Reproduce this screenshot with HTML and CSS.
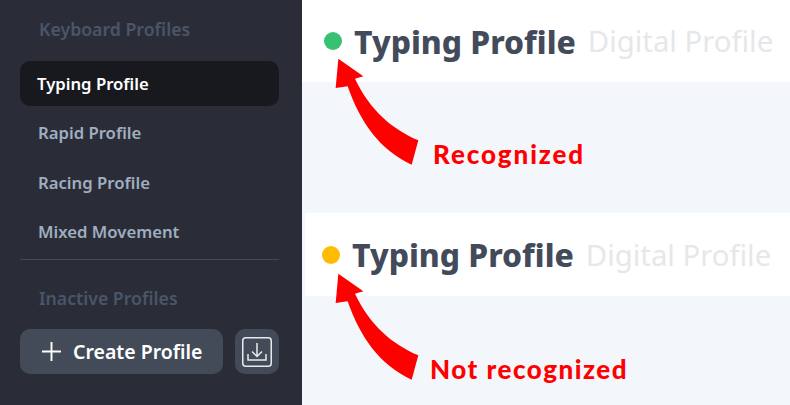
FILE: index.html
```html
<!DOCTYPE html>
<html lang="en">
<head>
    <meta charset="UTF-8">
    <title>Keyboard Profiles</title>
    <link rel="stylesheet" href="styles.css">
</head>
<body>
    <div class="app">
        <aside class="sidebar">
            <h3 class="side-title">Keyboard Profiles</h3>
            <ul class="profile-list">
                <li class="profile-item active">Typing Profile</li>
                <li class="profile-item">Rapid Profile</li>
                <li class="profile-item">Racing Profile</li>
                <li class="profile-item">Mixed Movement</li>
            </ul>
            <hr class="divider">
            <h3 class="side-title inactive">Inactive Profiles</h3>
            <div class="side-actions">
                <button class="create-btn">
                    <svg class="plus-icon" viewBox="0 0 20 20"><path d="M10 0v20M0 10h20"/></svg>
                    Create Profile
                </button>
                <button class="import-btn">
                    <svg class="import-icon" viewBox="0 0 30 30">
                        <rect x="0.75" y="0.75" width="28.5" height="28.5" rx="3"/>
                        <path d="M15 6v13M10 14.5l5 5 5-5M6 17v6h18v-6"/>
                    </svg>
                </button>
            </div>
        </aside>
        <main class="content">
            <section class="state state-ok">
                <header class="state-head">
                    <span class="dot green"></span>
                    <span class="profile-name">Typing Profile</span>
                    <span class="profile-type">Digital Profile</span>
                </header>
                <svg class="arrow" viewBox="100 170 255 330"><path d="M110 175L185 228L160 235C205 330 270 385 350 420L330 493C235 450 175 365 138 258L102 263Z"/></svg>
                <div class="note">Recognized</div>
            </section>
            <section class="state state-bad">
                <header class="state-head">
                    <span class="dot yellow"></span>
                    <span class="profile-name">Typing Profile</span>
                    <span class="profile-type">Digital Profile</span>
                </header>
                <svg class="arrow" viewBox="100 170 255 330"><path d="M110 175L185 228L160 235C205 330 270 385 350 420L330 493C235 450 175 365 138 258L102 263Z"/></svg>
                <div class="note">Not recognized</div>
            </section>
        </main>
    </div>
</body>
</html>
```

FILE: styles.css
```css
* { box-sizing: border-box; }
html, body {
    margin: 0;
    height: 100%;
    overflow: hidden;
}
body {
    font-family: "Noto Sans", "Open Sans", sans-serif;
    background: #f3f6fa;
}
.app {
    display: flex;
    height: 405px;
}

/* sidebar */
.sidebar {
    width: 302px;
    flex: none;
    padding: 0 23px 0 20px;
    background: #2a2d38;
}
.side-title {
    margin: 0;
    padding: 18px 0 0 19px;
    height: 61px;
    font-size: 17.7px;
    line-height: 22px;
    font-weight: 600;
    color: #4a5568;
}
.side-title.inactive {
    padding-top: 27px;
    height: 69.5px;
}
.profile-list {
    list-style: none;
    margin: 0;
    padding: 0;
}
.profile-item {
    height: 49.5px;
    padding-left: 18px;
    line-height: 46px;
    font-size: 16.7px;
    font-weight: 600;
    color: #a0aec0;
    border-radius: 10px;
}
.profile-item.active {
    height: 45px;
    margin-bottom: 4px;
    padding-left: 17px;
    background: #17191f;
    color: #fff;
}
.divider {
    margin: 0;
    border: none;
    border-top: 1px solid #414a58;
}
.side-actions {
    display: flex;
    gap: 12px;
}
.create-btn, .import-btn {
    height: 45px;
    border: none;
    border-radius: 10px;
    background: #434b58;
    color: #fff;
    font-family: inherit;
}
.create-btn {
    width: 203px;
    display: flex;
    align-items: center;
    gap: 12px;
    padding: 0 0 0 22px;
    font-size: 19.5px;
    font-weight: 600;
}
.plus-icon {
    width: 19px;
    height: 19px;
    fill: none;
    stroke: #fff;
    stroke-width: 2;
}
.import-btn {
    width: 44px;
    padding: 0;
    display: flex;
    align-items: center;
    justify-content: center;
}
.import-icon {
    width: 30px;
    height: 30px;
    fill: none;
    stroke: #e8eaee;
    stroke-width: 1.5;
}

/* right side */
.content {
    flex: 1;
    min-width: 0;
}
.state {
    position: relative;
}
.state-ok { height: 213px; }
.state-bad { height: 192px; }
.state-head {
    display: flex;
    align-items: center;
    background: #fff;
    white-space: nowrap;
    overflow: hidden;
}
.state-ok .state-head {
    height: 82px;
    padding-left: 22px;
}
.state-bad .state-head {
    height: 83px;
    margin-left: 3px;
    padding-left: 17px;
}
.dot {
    width: 18px;
    height: 18px;
    border-radius: 50%;
    flex: none;
    margin-right: 12px;
}
.dot.green { background: #38c172; }
.dot.yellow { background: #ffbb00; }
.profile-name {
    font-size: 31.8px;
    font-weight: 800;
    color: #434b5b;
}
.profile-type {
    margin-left: 12px;
    font-size: 29.3px;
    color: #e6e7e9;
}

/* annotations */
.arrow {
    position: absolute;
    left: 33.3px;
    width: 85px;
    height: 110px;
    fill: #ff0000;
}
.state-ok .arrow { top: 56.7px; }
.state-bad .arrow { top: 58.7px; }
.note {
    position: absolute;
    font-family: "Lato", sans-serif;
    font-weight: 900;
    font-size: 26px;
    line-height: 30px;
    letter-spacing: 1.5px;
    color: #ff0000;
    white-space: nowrap;
}
.state-ok .note { left: 131px; top: 139px; letter-spacing: 1.9px; }
.state-bad .note { left: 128px; top: 141px; }
```
